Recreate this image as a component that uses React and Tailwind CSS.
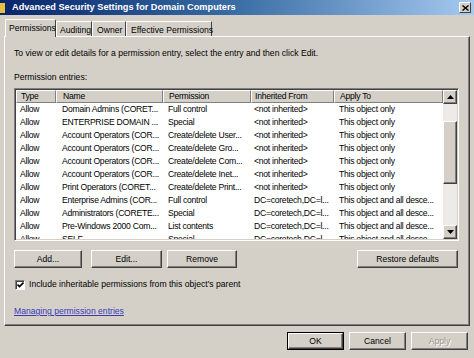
import React from "react";

const rows = [
  ["Allow", "Domain Admins (CORET...", "Full control", "<not inherited>", "This object only"],
  ["Allow", "ENTERPRISE DOMAIN ...", "Special", "<not inherited>", "This object only"],
  ["Allow", "Account Operators (COR...", "Create/delete User...", "<not inherited>", "This object only"],
  ["Allow", "Account Operators (COR...", "Create/delete Gro...", "<not inherited>", "This object only"],
  ["Allow", "Account Operators (COR...", "Create/delete Com...", "<not inherited>", "This object only"],
  ["Allow", "Account Operators (COR...", "Create/delete Inet...", "<not inherited>", "This object only"],
  ["Allow", "Print Operators (CORET...", "Create/delete Print...", "<not inherited>", "This object only"],
  ["Allow", "Enterprise Admins (COR...", "Full control", "DC=coretech,DC=l...", "This object and all desce..."],
  ["Allow", "Administrators (CORETE...", "Special", "DC=coretech,DC=l...", "This object and all desce..."],
  ["Allow", "Pre-Windows 2000 Com...", "List contents", "DC=coretech,DC=l...", "This object and all desce..."],
  ["Allow", "SELF", "Special", "DC=coretech,DC=l...", "This object and all desce..."],
];

const cols = [
  { w: "w-[40px]", p: "pl-[4px]" },
  { w: "w-[107px]", p: "pl-[6px]" },
  { w: "w-[88px]", p: "pl-[5px]" },
  { w: "w-[83px]", p: "pl-[3px]" },
  { w: "w-[109px]", p: "pl-[5px]" },
];
const headers = ["Type", "Name", "Permission", "Inherited From", "Apply To"];

function Btn({ children, className = "" }) {
  return (
    <div
      className={
        "h-[18px] flex items-center justify-center border border-t-white border-l-white border-r-[#404040] border-b-[#404040] shadow-[inset_-1px_-1px_0_#808080] bg-[#d4d0c8] " +
        className
      }
    >
      {children}
    </div>
  );
}

export default function App() {
  return (
    <div
      className="w-[474px] h-[358px] bg-[#d4d0c8] overflow-hidden text-[8.6px] leading-[11px] text-black"
      style={{ fontFamily: '"Liberation Sans", Arial, sans-serif' }}
    >
      {/* Title bar */}
      <div className="h-[15px] flex items-center bg-gradient-to-r from-[#0a246a] via-[#3a6ea5] to-[#a6caf0] relative">
        <div className="w-[5px] h-[10px] bg-[#e8c040] ml-0 mr-[7px]" />
        <span className="text-white font-bold text-[9.2px] leading-[13px] whitespace-nowrap">
          Advanced Security Settings for Domain Computers
        </span>
        <div className="ml-auto mr-[3px] w-[12px] h-[11px] bg-[#d4d0c8] border border-t-white border-l-white border-r-[#404040] border-b-[#404040] flex items-center justify-center">
          <svg width="7" height="6" viewBox="0 0 7 6">
            <path d="M0.5 0.5 L6.5 5.5 M6.5 0.5 L0.5 5.5" stroke="#000" strokeWidth="1.4" />
          </svg>
        </div>
      </div>

      {/* Tabs */}
      <div className="flex items-end pl-[5px] mt-[4px] whitespace-nowrap">
        <div className="relative z-10 h-[18px] -mb-px w-[51px] bg-[#d4d0c8] border-t border-l border-t-white border-l-white border-r border-r-[#404040] rounded-t-[2px] pl-[3px] pt-[3px]">
          Permissions
        </div>
        <div className="h-[15px] w-[36px] border-t border-l border-t-white border-l-white border-r border-r-[#404040] pl-[3px] pt-[3px]">
          Auditing
        </div>
        <div className="h-[15px] w-[34px] border-t border-l border-t-white border-l-white border-r border-r-[#404040] pl-[4px] pt-[3px]">
          Owner
        </div>
        <div className="h-[15px] w-[86px] border-t border-l border-t-white border-l-white border-r border-r-[#404040] pl-[4px] pt-[3px]">
          Effective Permissions
        </div>
      </div>

      {/* Panel */}
      <div className="ml-[4px] w-[466px] h-[290px] border border-t-white border-l-white border-r-[#404040] border-b-[#404040] shadow-[inset_-1px_-1px_0_#808080] pl-[9px] flex flex-col">
        <div className="pt-[11px] whitespace-nowrap">
          To view or edit details for a permission entry, select the entry and then click Edit.
        </div>
        <div className="mt-[13px]">Permission entries:</div>

        {/* List */}
        <div className="mt-[5px] w-[445px] h-[153px] border border-t-[#808080] border-l-[#808080] border-r-white border-b-white shadow-[inset_1px_1px_0_#404040] p-px flex">
          <div className="flex-1 bg-white overflow-hidden flex flex-col tracking-[-0.25px]">
            <div className="flex h-[13px] shrink-0 bg-[#d4d0c8]">
              {headers.map((h, i) => (
                <div
                  key={h}
                  className={
                    cols[i].w +
                    " " +
                    cols[i].p +
                    " h-[13px] shrink-0 border-t border-l border-t-white border-l-white border-r border-b border-r-[#808080] border-b-[#808080] leading-[11px] whitespace-nowrap overflow-hidden"
                  }
                >
                  {h}
                </div>
              ))}
              <div className="flex-1 border-t border-b border-t-white border-b-[#808080]" />
            </div>
            {rows.map((r, ri) => (
              <div key={ri} className="flex h-[13px] shrink-0 items-center">
                {r.map((c, ci) => (
                  <div key={ci} className={cols[ci].w + " " + cols[ci].p + " shrink-0 whitespace-nowrap"}>
                    {c}
                  </div>
                ))}
              </div>
            ))}
          </div>
          {/* Scrollbar */}
          <div className="w-[14px] flex flex-col bg-[#ecebe7]">
            <div className="h-[14px] bg-[#d4d0c8] border border-t-white border-l-white border-r-[#404040] border-b-[#404040] shadow-[inset_-1px_-1px_0_#808080] flex items-center justify-center">
              <svg width="7" height="4" viewBox="0 0 7 4">
                <path d="M3.5 0 L7 4 L0 4 Z" fill="#000" />
              </svg>
            </div>
            <div className="h-[17px]" />
            <div className="h-[63px] bg-[#d4d0c8] border border-t-white border-l-white border-r-[#404040] border-b-[#404040] shadow-[inset_-1px_-1px_0_#808080]" />
            <div className="flex-1" />
            <div className="h-[14px] bg-[#d4d0c8] border border-t-white border-l-white border-r-[#404040] border-b-[#404040] shadow-[inset_-1px_-1px_0_#808080] flex items-center justify-center">
              <svg width="7" height="4" viewBox="0 0 7 4">
                <path d="M0 0 L7 0 L3.5 4 Z" fill="#000" />
              </svg>
            </div>
          </div>
        </div>

        {/* Buttons */}
        <div className="mt-[9px] flex w-[445px]">
          <Btn className="w-[68px]">Add...</Btn>
          <Btn className="w-[71px] ml-[9px]">Edit...</Btn>
          <Btn className="w-[70px] ml-[5px]">Remove</Btn>
          <Btn className="w-[101px] ml-auto mr-px">Restore defaults</Btn>
        </div>

        {/* Checkbox */}
        <div className="mt-[10px] h-[13px] flex items-center">
          <div className="ml-px w-[10px] h-[10px] bg-white border border-t-[#808080] border-l-[#808080] border-r-white border-b-white shadow-[inset_1px_1px_0_#404040] flex items-center justify-center">
            <svg width="7" height="6" viewBox="0 0 7 6">
              <path d="M0.5 2.5 L2.5 4.5 L6.5 0.5" stroke="#000" strokeWidth="1.6" fill="none" />
            </svg>
          </div>
          <span className="ml-[4px]">Include inheritable permissions from this object's parent</span>
        </div>

        {/* Link */}
        <div className="mt-[15px]">
          <span className="text-[#3a3ab8] underline">Managing permission entries</span>
        </div>
      </div>

      {/* Bottom buttons */}
      <div className="mt-[6px] flex justify-end pr-[6px] gap-[5px]">
        <div className="w-[57px] h-[18px] border border-black p-0">
          <div className="w-full h-full flex items-center justify-center border border-t-white border-l-white border-r-[#404040] border-b-[#404040] shadow-[inset_-1px_-1px_0_#808080] bg-[#d4d0c8]">
            OK
          </div>
        </div>
        <Btn className="w-[57px]">Cancel</Btn>
        <Btn className="w-[57px] text-[#9a978f] [text-shadow:1px_1px_0_#fff]">Apply</Btn>
      </div>
    </div>
  );
}
